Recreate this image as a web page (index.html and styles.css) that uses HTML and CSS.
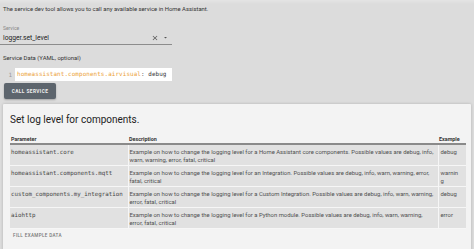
FILE: index.html
```html
<!DOCTYPE html>
<html lang="en">
<head>
    <meta charset="UTF-8">
    <title>Developer Tools - Services</title>
    <link rel="stylesheet" href="styles.css">
</head>
<body>
    <div class="page">
        <p class="intro">The service dev tool allows you to call any available service in Home Assistant.</p>

        <div class="field">
            <label class="field-label">Service</label>
            <div class="field-input">
                <span class="field-value">logger.set_level</span>
                <span class="field-icons">
                    <svg class="icon-clear" viewBox="0 0 24 24" width="8" height="8">
                        <path d="M19 6.41L17.59 5 12 10.59 6.41 5 5 6.41 10.59 12 5 17.59 6.41 19 12 13.41 17.59 19 19 17.59 13.41 12z"/>
                    </svg>
                    <svg class="icon-arrow" viewBox="0 0 24 24" width="7" height="7">
                        <path d="M7 10l5 5 5-5z"/>
                    </svg>
                </span>
            </div>
        </div>

        <div class="data-label">Service Data (YAML, optional)</div>
        <div class="editor">
            <span class="gutter">1</span>
            <div class="code"><span class="yaml-key">homeassistant.components.airvisual</span>: debug</div>
        </div>

        <button class="btn">Call Service</button>

        <div class="card">
            <h2>Set log level for components.</h2>
            <table class="attrs">
                <colgroup>
                    <col class="col-param">
                    <col class="col-desc">
                    <col class="col-example">
                </colgroup>
                <thead>
                    <tr>
                        <th>Parameter</th>
                        <th>Description</th>
                        <th>Example</th>
                    </tr>
                </thead>
                <tbody>
                    <tr>
                        <td class="mono">homeassistant.core</td>
                        <td>Example on how to change the logging level for a Home Assistant core components. Possible values are debug, info, warn, warning, error, fatal, critical</td>
                        <td class="example">debug</td>
                    </tr>
                    <tr>
                        <td class="mono">homeassistant.components.mqtt</td>
                        <td>Example on how to change the logging level for an Integration. Possible values are debug, info, warn, warning, error, fatal, critical</td>
                        <td class="example">warning</td>
                    </tr>
                    <tr>
                        <td class="mono">custom_components.my_integration</td>
                        <td>Example on how to change the logging level for a Custom Integration. Possible values are debug, info, warn, warning, error, fatal, critical</td>
                        <td class="example">debug</td>
                    </tr>
                    <tr>
                        <td class="mono">aiohttp</td>
                        <td>Example on how to change the logging level for a Python module. Possible values are debug, info, warn, warning, error, fatal, critical</td>
                        <td class="example">error</td>
                    </tr>
                </tbody>
            </table>
            <button class="btn-text">Fill Example Data</button>
        </div>
    </div>
</body>
</html>
```

FILE: styles.css
```css
:root {
    --page-bg: #dcdcdc;
    --card-bg: #f3f3f3;
    --cell-bg: #e1e1e1;
    --text: #222;
    --muted: #777;
    --btn: #5d656d;
    --yaml-key: #eba136;
}

* {
    margin: 0;
    padding: 0;
    box-sizing: border-box;
}

body {
    background: var(--page-bg);
    color: var(--text);
    font-family: Roboto, "Liberation Sans", sans-serif;
    overflow: hidden;
}

.page {
    padding: 5px 0 0;
    background: linear-gradient(#e4e4e4, var(--page-bg) 4px);
}

.intro {
    padding-left: 3px;
    font-size: 5.9px;
    line-height: 8px;
    color: #333;
}

.field {
    width: 172px;
    margin-top: 12px;
    border-bottom: 1px solid #8c8c8c;
    padding: 0 0 2px 3px;
}

.field-label {
    display: block;
    font-size: 5px;
    line-height: 6px;
    color: #888;
}

.field-input {
    display: flex;
    align-items: center;
    margin-top: 2px;
    height: 9px;
}

.field-value {
    flex: 1;
    font-size: 6.7px;
    color: #222;
}

.field-icons {
    display: flex;
    align-items: center;
    gap: 3px;
    padding-right: 3px;
    fill: #555;
}

.data-label {
    padding-left: 3px;
    margin-top: 9px;
    font-size: 5.9px;
    line-height: 8px;
    color: #333;
}

.editor {
    display: flex;
    align-items: center;
    margin-top: 6px;
    height: 13px;
    font-family: "DejaVu Sans Mono", "Liberation Mono", monospace;
    font-size: 5.9px;
}

.gutter {
    width: 15px;
    padding-right: 3px;
    text-align: right;
    color: #999;
}

.code {
    width: 157px;
    height: 13px;
    line-height: 13px;
    background: #fff;
    padding-left: 2px;
    color: #333;
    letter-spacing: 0.1px;
}

.yaml-key {
    color: var(--yaml-key);
}

.btn {
    display: block;
    margin: 2px 0 0 4px;
    width: 52px;
    height: 16px;
    background: var(--btn);
    color: #f0f0f0;
    border: none;
    border-radius: 2px;
    font-family: Roboto, sans-serif;
    font-size: 4.8px;
    font-weight: 700;
    letter-spacing: 0.4px;
    text-transform: uppercase;
    box-shadow: 0 1px 2px rgba(0, 0, 0, 0.25);
}

.card {
    margin: 5px 3px 0;
    height: 200px;
    background: var(--card-bg);
    padding: 10px 5px 0 7px;
    box-shadow: 0 0 3px rgba(0, 0, 0, 0.2);
    border-radius: 1px;
}

.card h2 {
    font-size: 10px;
    font-weight: 400;
    line-height: 12px;
    color: #222;
}

.attrs {
    width: 456px;
    margin-top: 9px;
    table-layout: fixed;
    border-collapse: collapse;
    font-size: 5.9px;
    line-height: 8px;
}

.col-param {
    width: 118px;
}

.col-desc {
    width: 310px;
}

.col-example {
    width: 28px;
}

.attrs th {
    text-align: left;
    font-size: 5.4px;
    font-weight: 700;
    line-height: 7px;
    padding: 1px 1px 0;
    border-bottom: 2px solid #8a8a8a;
    color: #333;
}

.attrs td {
    vertical-align: top;
    background: var(--cell-bg);
    border: 1px solid #f6f6f6;
    padding: 3px 1px 1px;
    color: #505050;
    overflow-wrap: anywhere;
}

.attrs tr:first-child td {
    border-top: none;
}

.attrs td:first-child {
    border-left: none;
}

.attrs td:last-child {
    border-right: none;
}

.attrs td.mono {
    font-family: "DejaVu Sans Mono", "Liberation Mono", monospace;
    font-size: 5.8px;
    white-space: nowrap;
    color: #444;
}

.attrs td.example {
    padding: 3px 7px 1px 2px;
}

.btn-text {
    display: block;
    margin: 4px 0 0 3px;
    background: none;
    border: none;
    font-family: Roboto, sans-serif;
    font-size: 4.6px;
    font-weight: 500;
    letter-spacing: 0.35px;
    text-transform: uppercase;
    color: #777;
}
```
